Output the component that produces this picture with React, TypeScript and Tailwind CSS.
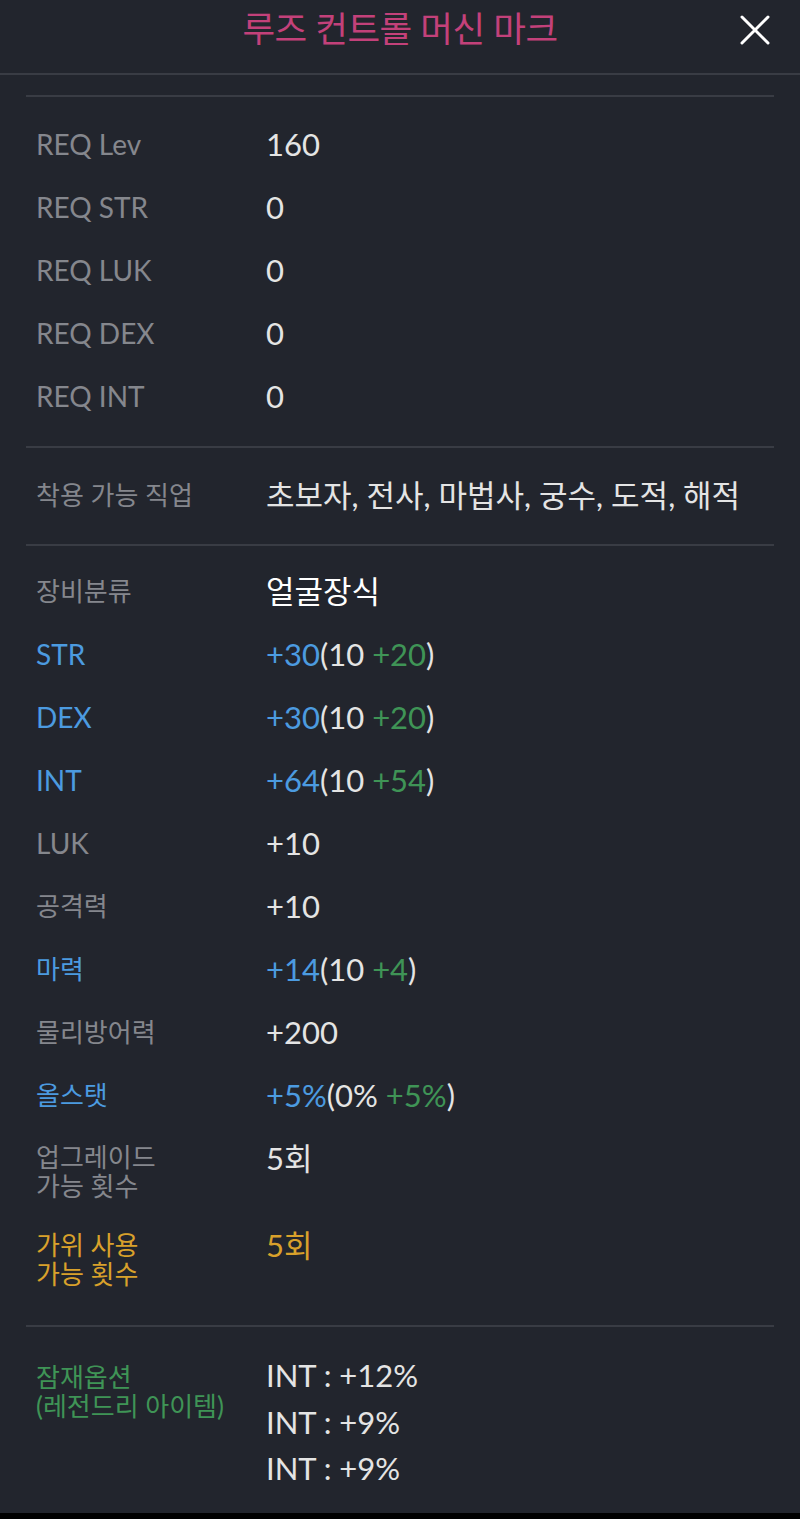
import React from "react";

const FONT = { fontFamily: '"Lato", "Noto Sans CJK KR", sans-serif' };

function Divider() {
  return <div className="h-[2px] bg-[#393c44]" />;
}

type Row = { label: React.ReactNode; value: React.ReactNode; labelClass?: string; latin?: boolean };

const B = ({ children }: { children: React.ReactNode }) => <span className="text-[#4c9be0]">{children}</span>;
const G = ({ children }: { children: React.ReactNode }) => <span className="text-[#3f9456]">{children}</span>;

function SingleRow({ label, value, labelClass, latin }: Row) {
  return (
    <div className="flex h-[63px] items-center">
      <div
        className={`w-[240px] pl-[10px] leading-[29px] ${latin ? "text-[28px]" : "text-[26px]"} ${labelClass ?? "text-[#85878d]"}`}
      >
        {label}
      </div>
      <div className="text-[31px] leading-[29px] text-[#e4e4e4]">{value}</div>
    </div>
  );
}

export default function App() {
  const req: Row[] = [
    { label: "REQ Lev", value: "160", latin: true },
    { label: "REQ STR", value: "0", latin: true },
    { label: "REQ LUK", value: "0", latin: true },
    { label: "REQ DEX", value: "0", latin: true },
    { label: "REQ INT", value: "0", latin: true },
  ];
  const stats: Row[] = [
    { label: "장비분류", value: <span className="text-white">얼굴장식</span> },
    { label: "STR", latin: true, labelClass: "text-[#4c9be0]", value: <><B>+30</B>(10 <G>+20</G>)</> },
    { label: "DEX", latin: true, labelClass: "text-[#4c9be0]", value: <><B>+30</B>(10 <G>+20</G>)</> },
    { label: "INT", latin: true, labelClass: "text-[#4c9be0]", value: <><B>+64</B>(10 <G>+54</G>)</> },
    { label: "LUK", latin: true, value: "+10" },
    { label: "공격력", value: "+10" },
    { label: "마력", labelClass: "text-[#4c9be0]", value: <><B>+14</B>(10 <G>+4</G>)</> },
    { label: "물리방어력", value: "+200" },
    { label: "올스탯", labelClass: "text-[#4c9be0]", value: <><B>+5%</B>(0% <G>+5%</G>)</> },
  ];
  return (
    <div className="min-h-[1519px] bg-black" style={FONT}>
      <div className="h-[1513px] bg-[#22252d] flex flex-col">
        <header className="relative h-[75px] border-b-2 border-[#393c44] flex items-center justify-center">
          <h1 className="text-[35.5px] leading-none text-[#c3417a] -mt-[16px] tracking-[-0.5px]">루즈 컨트롤 머신 마크</h1>
          <svg className="absolute right-[30px] top-[15px]" width="30" height="30" viewBox="0 0 30 30">
            <path d="M2 2 L28 28 M28 2 L2 28" stroke="#ffffff" strokeWidth="3" strokeLinecap="round" />
          </svg>
        </header>
        <div className="px-[26px] pt-[20px]">
          <Divider />
          <div className="pt-[16px] pb-[18px]">
            {req.map((r, i) => (
              <SingleRow key={i} {...r} />
            ))}
          </div>
          <Divider />
          <div className="pt-[16px] pb-[17px]">
            <SingleRow label="착용 가능 직업" value="초보자, 전사, 마법사, 궁수, 도적, 해적" />
          </div>
          <Divider />
          <div className="pt-[14px] pb-[36px]">
            {stats.map((r, i) => (
              <SingleRow key={i} {...r} />
            ))}
            <div className="flex pt-[16px]">
              <div className="w-[240px] pl-[10px] text-[26px] leading-[29px] text-[#85878d]">
                업그레이드
                <br />
                가능 횟수
              </div>
              <div className="text-[31px] leading-[29px] text-[#e4e4e4] mt-[1px]">5회</div>
            </div>
            <div className="flex pt-[30px]">
              <div className="w-[240px] pl-[10px] text-[26px] leading-[29px] text-[#d9a12b]">
                가위 사용
                <br />
                가능 횟수
              </div>
              <div className="text-[31px] leading-[29px] text-[#d9a12b]">5회</div>
            </div>
          </div>
          <Divider />
          <div className="flex pt-[25px]">
            <div className="w-[240px] pl-[10px] pt-[11px] text-[26px] leading-[29px] text-[#3f9456]">
              잠재옵션
              <br />
              (레전드리 아이템)
            </div>
            <div className="text-[31px] leading-[46.5px] text-[#e4e4e4]">
              <div>INT : +12%</div>
              <div>INT : +9%</div>
              <div>INT : +9%</div>
            </div>
          </div>
        </div>
      </div>
    </div>
  );
}
